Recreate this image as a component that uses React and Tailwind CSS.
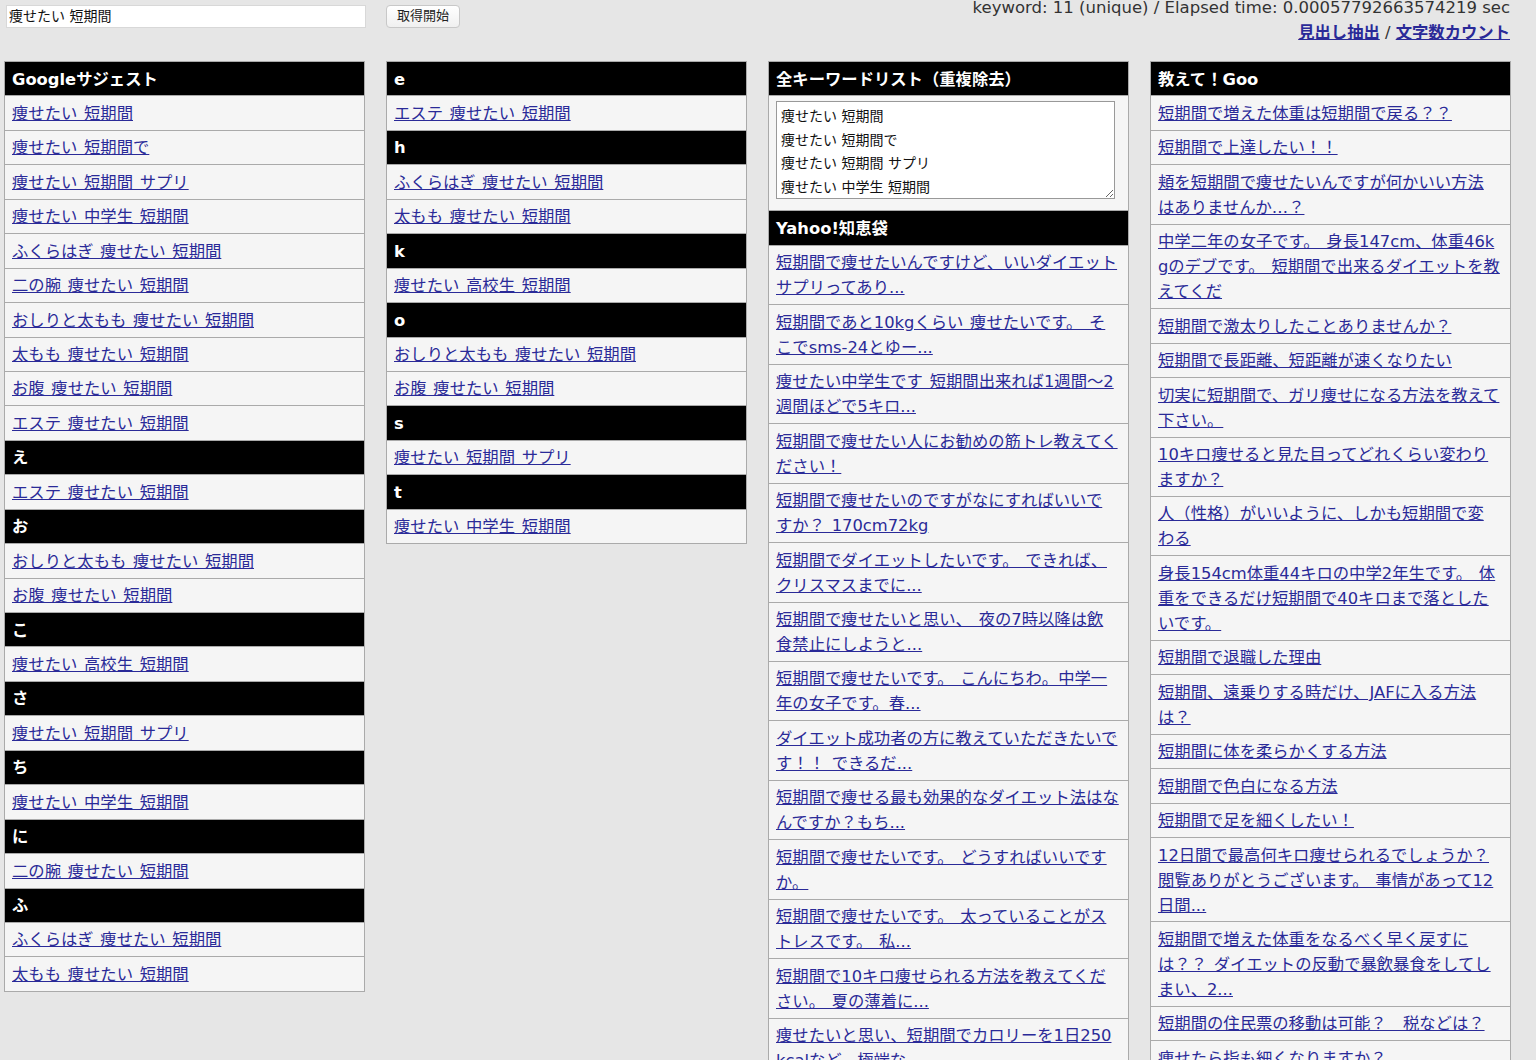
import React from "react";

const col1 = [
  { h: "Googleサジェスト" },
  "痩せたい 短期間",
  "痩せたい 短期間で",
  "痩せたい 短期間 サプリ",
  "痩せたい 中学生 短期間",
  "ふくらはぎ 痩せたい 短期間",
  "二の腕 痩せたい 短期間",
  "おしりと太もも 痩せたい 短期間",
  "太もも 痩せたい 短期間",
  "お腹 痩せたい 短期間",
  "エステ 痩せたい 短期間",
  { h: "え" },
  "エステ 痩せたい 短期間",
  { h: "お" },
  "おしりと太もも 痩せたい 短期間",
  "お腹 痩せたい 短期間",
  { h: "こ" },
  "痩せたい 高校生 短期間",
  { h: "さ" },
  "痩せたい 短期間 サプリ",
  { h: "ち" },
  "痩せたい 中学生 短期間",
  { h: "に" },
  "二の腕 痩せたい 短期間",
  { h: "ふ" },
  "ふくらはぎ 痩せたい 短期間",
  "太もも 痩せたい 短期間",
];

const col2 = [
  { h: "e" },
  "エステ 痩せたい 短期間",
  { h: "h" },
  "ふくらはぎ 痩せたい 短期間",
  "太もも 痩せたい 短期間",
  { h: "k" },
  "痩せたい 高校生 短期間",
  { h: "o" },
  "おしりと太もも 痩せたい 短期間",
  "お腹 痩せたい 短期間",
  { h: "s" },
  "痩せたい 短期間 サプリ",
  { h: "t" },
  "痩せたい 中学生 短期間",
];

const yahoo = [
  "短期間で痩せたいんですけど、いいダイエットサプリってあり...",
  "短期間であと10kgくらい 痩せたいです。 そこでsms-24とゆー...",
  "痩せたい中学生です 短期間出来れば1週間〜2週間ほどで5キロ...",
  "短期間で痩せたい人にお勧めの筋トレ教えてください！",
  "短期間で痩せたいのですがなにすればいいで\nすか？ 170cm72kg",
  "短期間でダイエットしたいです。 できれば、クリスマスまでに...",
  "短期間で痩せたいと思い、 夜の7時以降は飲\n食禁止にしようと...",
  "短期間で痩せたいです。 こんにちわ。中学一年の女子です。春...",
  "ダイエット成功者の方に教えていただきたいです！！ できるだ...",
  "短期間で痩せる最も効果的なダイエット法はなんですか？もち...",
  "短期間で痩せたいです。 どうすればいいですか。",
  "短期間で痩せたいです。 太っていることがストレスです。 私...",
  "短期間で10キロ痩せられる方法を教えてください。 夏の薄着に...",
  "痩せたいと思い、短期間でカロリーを1日250kcalなど、極端な...",
];

const goo = [
  "短期間で増えた体重は短期間で戻る？？",
  "短期間で上達したい！！",
  "頬を短期間で痩せたいんですが何かいい方法\nはありませんか…？",
  "中学二年の女子です。 身長147cm、体重46kgのデブです。 短期間で出来るダイエットを教えてくだ",
  "短期間で激太りしたことありませんか？",
  "短期間で長距離、短距離が速くなりたい",
  "切実に短期間で、ガリ痩せになる方法を教えて下さい。",
  "10キロ痩せると見た目ってどれくらい変わりますか？",
  "人（性格）がいいように、しかも短期間で変\nわる",
  "身長154cm体重44キロの中学2年生です。 体重をできるだけ短期間で40キロまで落としたいです。",
  "短期間で退職した理由",
  "短期間、遠乗りする時だけ、JAFに入る方法は？",
  "短期間に体を柔らかくする方法",
  "短期間で色白になる方法",
  "短期間で足を細くしたい！",
  "12日間で最高何キロ痩せられるでしょうか？ 閲覧ありがとうございます。 事情があって12日間...",
  "短期間で増えた体重をなるべく早く戻すには？？ ダイエットの反動で暴飲暴食をしてしまい、2...",
  "短期間の住民票の移動は可能？　税などは？",
  "痩せたら指も細くなりますか？",
];

const keywords = [
  "痩せたい 短期間",
  "痩せたい 短期間で",
  "痩せたい 短期間 サプリ",
  "痩せたい 中学生 短期間",
  "ふくらはぎ 痩せたい 短期間",
  "二の腕 痩せたい 短期間",
  "おしりと太もも 痩せたい 短期間",
  "太もも 痩せたい 短期間",
  "お腹 痩せたい 短期間",
  "エステ 痩せたい 短期間",
  "痩せたい 高校生 短期間",
];

function Header({ children }) {
  return (
    <div className="border-b border-[#aaa] bg-black pl-[7px] pr-[8px] pt-[4.5px] pb-[3.94px] text-[16.33px] font-bold leading-[25px] text-white">
      {children}
    </div>
  );
}

function Item({ children }) {
  return (
    <div className="border-b border-[#aaa] bg-[#f5f5f5] pl-[7px] pr-[8px] pt-[4.5px] pb-[3.94px] text-[16.33px] leading-[25px] [word-spacing:1.5px] break-all whitespace-pre-line">
      <a href="#" className="text-[#2a2a98] underline decoration-[#2a2a98]">
        {children}
      </a>
    </div>
  );
}

function Column({ rows }) {
  return (
    <div className="border border-b-0 border-[#aaa]">
      {rows.map((r, i) =>
        typeof r === "string" ? <Item key={i}>{r}</Item> : <Header key={i}>{r.h}</Header>
      )}
    </div>
  );
}

export default function App() {
  return (
    <div className="h-[1060px] overflow-hidden bg-[#e6e6e6] font-['DejaVu_Sans','Noto_Sans_CJK_JP',sans-serif] text-[#222]">
      <div className="flex h-[61px] items-start justify-between">
        <div className="flex items-start pt-[5px] pl-[6px]">
          <input
            readOnly
            defaultValue="痩せたい 短期間"
            className="h-[23px] w-[360px] border border-[#d8d8d8] bg-white px-[2px] pb-[3px] text-[14px] leading-[18px] text-[#111] outline-none"
          />
          <button className="ml-[20px] h-[23px] w-[74px] rounded-[4px] border border-[#c8c8c8] bg-gradient-to-b from-white to-[#f0f0f0] pb-[2px] text-[13px] leading-[18px] text-[#222]">
            取得開始
          </button>
        </div>
        <div className="mt-[-4px] mr-[26px] text-right leading-[24px] text-[#333]">
          <div className="text-[16.5px]">keyword: 11 (unique) / Elapsed time: 0.00057792663574219 sec</div>
          <div className="mt-[1px] text-[16.33px] font-bold">
            <a href="#" className="text-[#2a2a98] underline">見出し抽出</a>
            <span className="font-normal"> / </span>
            <a href="#" className="text-[#2a2a98] underline">文字数カウント</a>
          </div>
        </div>
      </div>
      <div className="flex items-start gap-[21px] pl-[4px]">
        <div className="w-[361px] shrink-0">
          <Column rows={col1} />
        </div>
        <div className="w-[361px] shrink-0">
          <Column rows={col2} />
        </div>
        <div className="w-[361px] shrink-0 border border-b-0 border-[#aaa]">
          <Header>全キーワードリスト（重複除去）</Header>
          <div className="border-b border-[#aaa] bg-[#f5f5f5] pt-[5px] pl-[7px] pb-[11px]">
            <textarea
              readOnly
              defaultValue={keywords.join("\n")}
              className="block h-[98px] w-[339px] overflow-hidden border border-[#999] bg-white px-[4px] pt-[3px] text-[14px] leading-[23.5px] text-[#111] outline-none"
            />
          </div>
          <Header>Yahoo!知恵袋</Header>
          {yahoo.map((t, i) => (
            <Item key={i}>{t}</Item>
          ))}
        </div>
        <div className="w-[361px] shrink-0 border border-b-0 border-[#aaa]">
          <Header>教えて！Goo</Header>
          {goo.map((t, i) => (
            <Item key={i}>{t}</Item>
          ))}
        </div>
      </div>
    </div>
  );
}
